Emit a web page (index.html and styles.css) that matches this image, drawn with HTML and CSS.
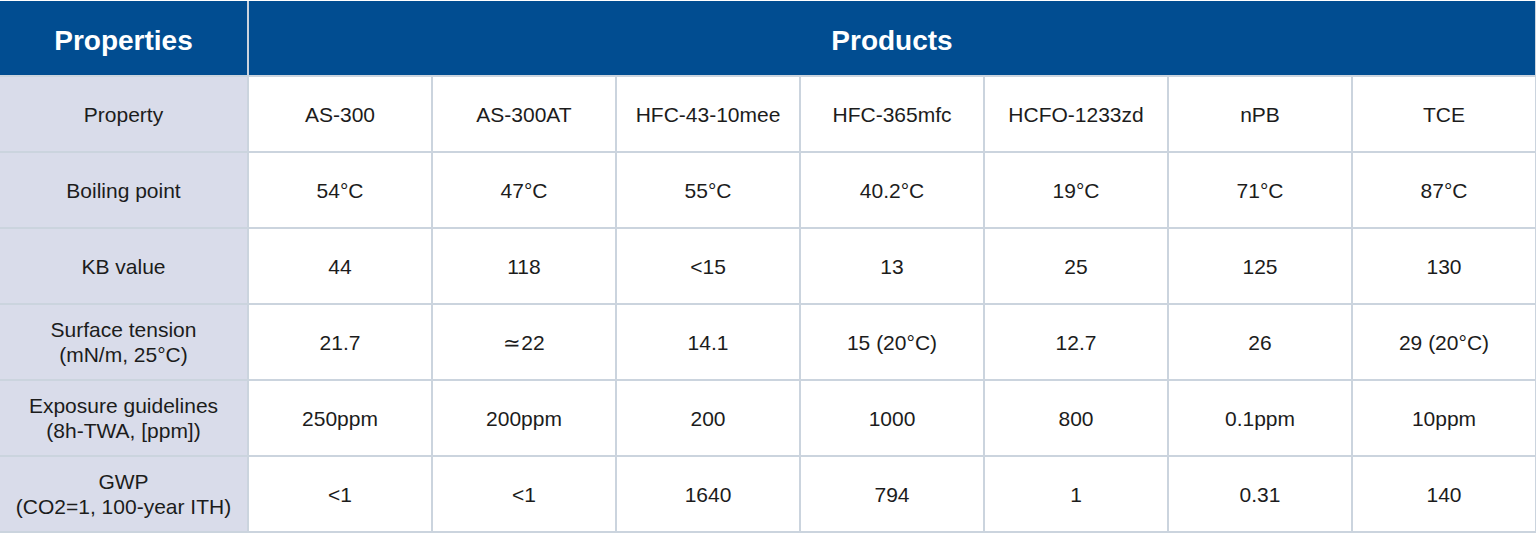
FILE: index.html
```html
<!DOCTYPE html>
<html lang="en">
<head>
<meta charset="utf-8">
<title>Properties</title>
<link rel="stylesheet" href="styles.css">
</head>
<body>
<div class="page">
  <div class="grid">
    <div class="hd">Properties</div>
    <div class="hd span">Products</div>

    <div class="prop">Property</div>
    <div class="cell">AS-300</div>
    <div class="cell">AS-300AT</div>
    <div class="cell">HFC-43-10mee</div>
    <div class="cell">HFC-365mfc</div>
    <div class="cell">HCFO-1233zd</div>
    <div class="cell">nPB</div>
    <div class="cell">TCE</div>

    <div class="prop">Boiling point</div>
    <div class="cell">54°C</div>
    <div class="cell">47°C</div>
    <div class="cell">55°C</div>
    <div class="cell">40.2°C</div>
    <div class="cell">19°C</div>
    <div class="cell">71°C</div>
    <div class="cell">87°C</div>

    <div class="prop">KB value</div>
    <div class="cell">44</div>
    <div class="cell">118</div>
    <div class="cell">&lt;15</div>
    <div class="cell">13</div>
    <div class="cell">25</div>
    <div class="cell">125</div>
    <div class="cell">130</div>

    <div class="prop">Surface tension<br>(mN/m, 25°C)</div>
    <div class="cell">21.7</div>
    <div class="cell">≃22</div>
    <div class="cell">14.1</div>
    <div class="cell">15 (20°C)</div>
    <div class="cell">12.7</div>
    <div class="cell">26</div>
    <div class="cell">29 (20°C)</div>

    <div class="prop">Exposure guidelines<br>(8h-TWA, [ppm])</div>
    <div class="cell">250ppm</div>
    <div class="cell">200ppm</div>
    <div class="cell">200</div>
    <div class="cell">1000</div>
    <div class="cell">800</div>
    <div class="cell">0.1ppm</div>
    <div class="cell">10ppm</div>

    <div class="prop">GWP<br>(CO2=1, 100-year ITH)</div>
    <div class="cell">&lt;1</div>
    <div class="cell">&lt;1</div>
    <div class="cell">1640</div>
    <div class="cell">794</div>
    <div class="cell">1</div>
    <div class="cell">0.31</div>
    <div class="cell">140</div>
  </div>
</div>
</body>
</html>
```

FILE: styles.css
```css
html, body {
  margin: 0;
  padding: 0;
  background: #ffffff;
}

.page {
  padding-top: 1px;
  width: 1536px;
  height: 534px;
  background: #ffffff;
}

.grid {
  display: grid;
  grid-template-columns: 247px repeat(7, 182px);
  grid-template-rows: 74px repeat(6, 74px);
  column-gap: 2px;
  row-gap: 2px;
  padding: 0 1px 2px 0;
  background: #cbd4de;
  width: 1535px;
  font-family: "Liberation Sans", Arial, sans-serif;
  font-size: 21px;
  line-height: 25px;
  color: #1c1c1c;
}

.grid > div {
  display: flex;
  align-items: center;
  justify-content: center;
  text-align: center;
}

.hd {
  background: #014d91;
  color: #ffffff;
  font-weight: bold;
  font-size: 28px;
  line-height: 32px;
  padding-top: 5px;
}

.span {
  grid-column: span 7;
}

.prop {
  background: #d9dcea;
}

.cell {
  background: #ffffff;
}
```
